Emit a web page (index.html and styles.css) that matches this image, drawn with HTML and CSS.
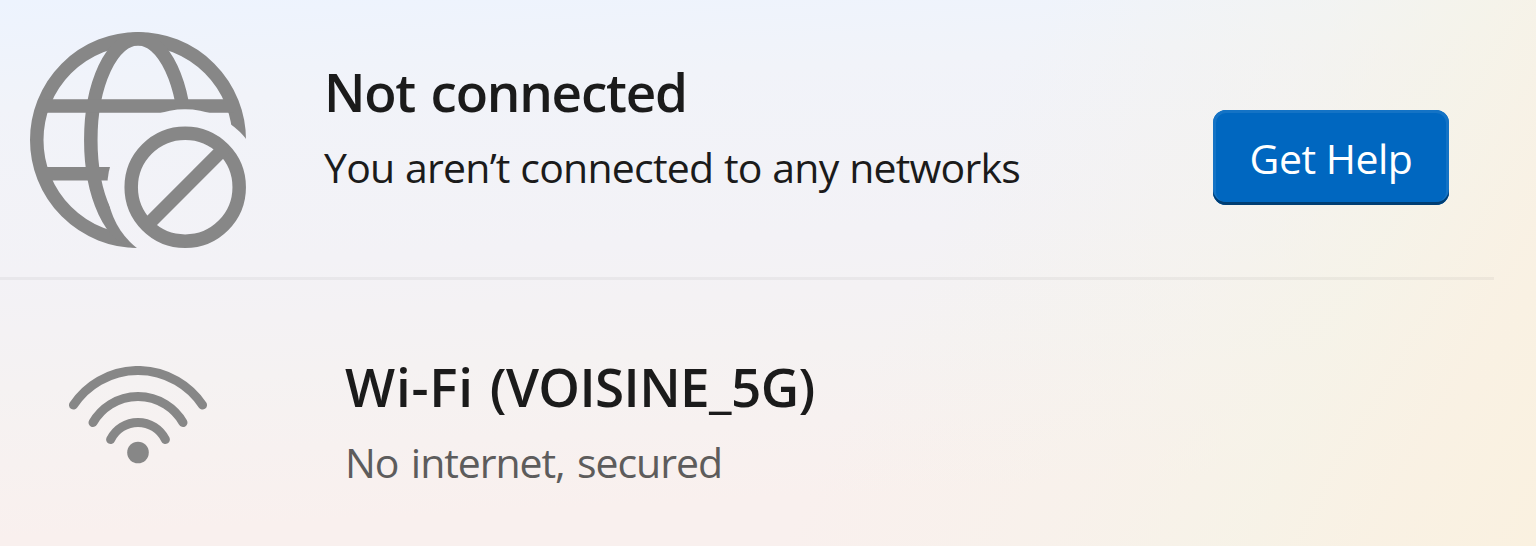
FILE: index.html
```html
<!DOCTYPE html>
<html lang="en">
<head>
<meta charset="utf-8">
<title>Network status</title>
<link rel="stylesheet" href="styles.css">
</head>
<body>
<main class="panel">
  <section class="row status">
    <svg class="globe" viewBox="0 0 216 216" aria-hidden="true">
      <defs>
        <mask id="badge-gap">
          <rect width="216" height="216" fill="#fff"/>
          <circle cx="155" cy="155" r="77.7" fill="#000"/>
        </mask>
        <clipPath id="globe-edge"><circle cx="108" cy="108" r="108"/></clipPath>
      </defs>
      <g mask="url(#badge-gap)" fill="none" stroke="#878787" stroke-width="13.5">
        <circle cx="108" cy="108" r="101.25"/>
        <g clip-path="url(#globe-edge)">
          <ellipse cx="108" cy="108" rx="47.2" ry="101.25"/>
          <path d="M12 74.1H204M12 141.8H204"/>
        </g>
      </g>
      <g fill="none" stroke="#878787" stroke-width="13.5">
        <circle cx="155.2" cy="155.2" r="54"/>
        <path d="M117 193.4L193.4 117"/>
      </g>
    </svg>
    <div class="info">
      <h1 class="title tight">Not connected</h1>
      <p class="detail">You aren’t connected to any networks</p>
    </div>
    <button class="help" type="button">Get Help</button>
  </section>
  <hr class="divider">
  <section class="row network">
    <svg class="wifi" viewBox="0 0 138 98" aria-hidden="true">
      <g fill="none" stroke="#878787" stroke-width="9" stroke-linecap="round">
        <path d="M4.5 39A77.5 77.5 0 0 1 133.5 39"/>
        <path d="M24 56.5A52 52 0 0 1 114 56.5"/>
        <path d="M41.6 73.5A30.5 30.5 0 0 1 96.4 73.5"/>
      </g>
      <circle cx="69" cy="86.5" r="10.8" fill="#878787"/>
    </svg>
    <div class="info">
      <h2 class="title"><span class="kind">Wi-Fi</span> <span class="ssid">(VOISINE_5G)</span></h2>
      <p class="detail muted">No internet, secured</p>
    </div>
  </section>
</main>
</body>
</html>
```
FILE: styles.css
```css
* { box-sizing: border-box; }
body {
  margin: 0;
  font-family: "Open Sans", "Noto Sans", sans-serif;
  color: #1b1b1b;
}
.panel {
  width: 1536px;
  height: 546px;
  overflow: hidden;
  background:
    linear-gradient(116deg, rgba(247,243,230,0) 58%, rgba(246,243,230,.4) 74%, rgba(246,243,230,.8) 83%, rgba(249,241,227,.95) 91%, #faf1e0 100%),
    linear-gradient(177deg, #edf3fe 0%, #f1f3f9 17%, #f3f2f6 44%, #f5f2f2 62%, #f9f0ee 86%, #f9f0ee 100%);
}
.row { display: flex; align-items: flex-start; }
.status { height: 277px; padding: 32px 87px 0 30px; }
.globe { width: 216px; height: 216px; flex: none; }
.status .info { margin: 24px 0 0 78px; }
.title, .detail { margin: 0; white-space: nowrap; }
.title { font-size: 53px; line-height: 72px; font-weight: 600; }
.tight { letter-spacing: -1.25px; word-spacing: 3px; }
.kind { letter-spacing: .8px; }
.ssid { letter-spacing: -.6px; margin-left: 2px; }
.detail {
  margin-top: 11px;
  font-size: 41px;
  line-height: 56px;
  font-weight: 400;
  letter-spacing: -.78px;
  word-spacing: .8px;
}
.muted { color: #5d5c5c; letter-spacing: -1.05px; word-spacing: 2.8px; }
.help {
  width: 236px;
  height: 95px;
  margin: 78px 0 0 auto;
  padding: 0;
  border: 0;
  border-radius: 13px;
  background: #0067c0;
  box-shadow: inset 0 -3px #003e73, inset 0 0 0 3px #1473c5;
  color: #fff;
  font: 400 41px/56px "Open Sans", "Noto Sans", sans-serif;
  letter-spacing: -.5px;
  white-space: nowrap;
}
.divider { width: 1494px; height: 3px; margin: 0; border: 0; background: rgba(0,0,0,.045); }
.network { padding: 70px 0 0 69px; }
.wifi { width: 138px; height: 98px; margin-top: 16px; flex: none; }
.network .info { margin: 1px 0 0 138px; }
```
